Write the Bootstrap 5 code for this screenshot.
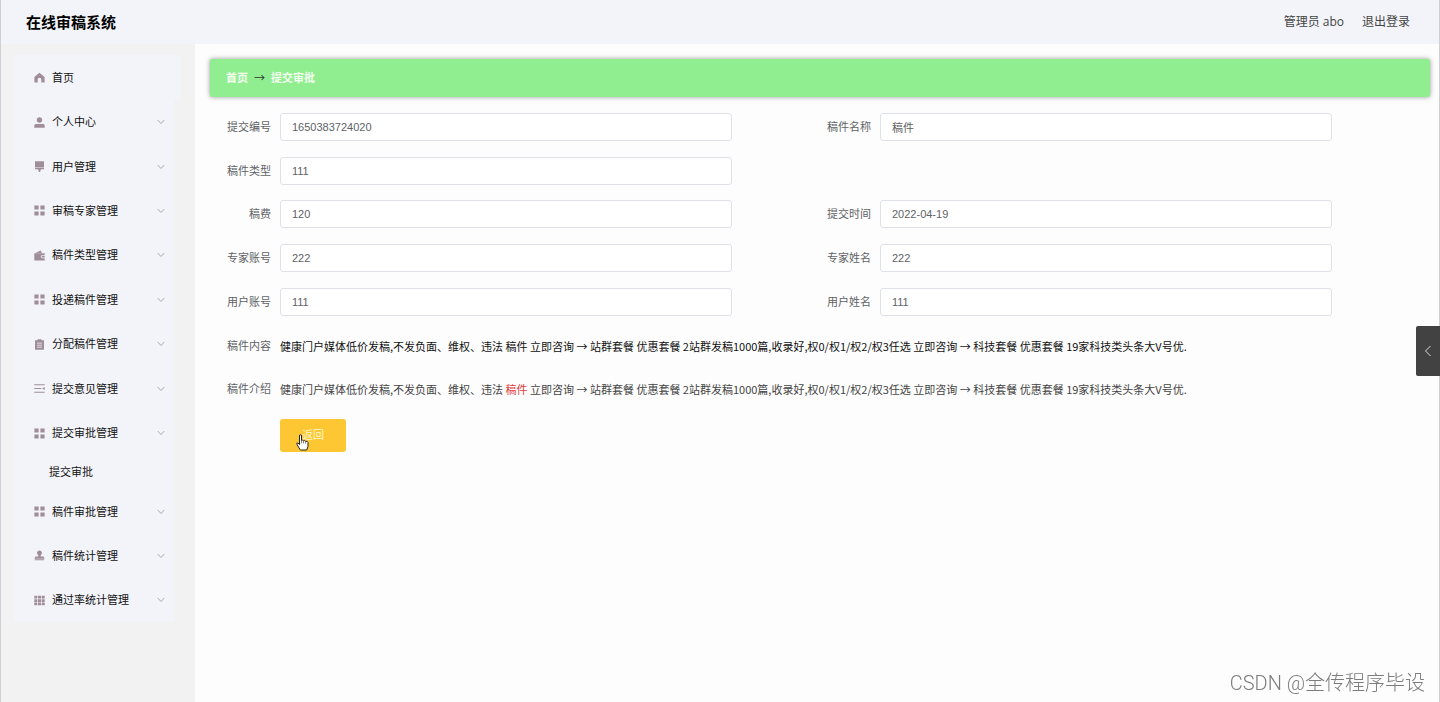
<!DOCTYPE html>
<html lang="zh-CN">
<head>
<meta charset="utf-8">
<meta name="viewport" content="width=device-width, initial-scale=1">
<title>在线审稿系统</title>
<link href="https://cdn.jsdelivr.net/npm/bootstrap@5.3.0/dist/css/bootstrap.min.css" rel="stylesheet">
<style>
  body { font-family: "Open Sans", "Noto Sans CJK SC", sans-serif; font-size: 11px; line-height: 16px; background: #fdfdfd; color: #111; border: solid #d0d0d4; border-width: 0 1px; }
  .topbar { min-height: 44px; background: #f3f4f9; padding: 0 29px 0 25px; }
  .site-title { font-size: 15px; line-height: 20px; font-weight: 700; color: #000; }
  .user-links { font-size: 12px; gap: 18px; color: #444; }
  .sidebar { width: 194px; background: #f2f2f2; padding: 11px 21px 0 13px; }
  .menu { min-height: 567px; background: #f3f4f9; border-radius: 3px; }
  .menu > li { flex: 1 1 44px; }
  .menu > li:first-child { margin-right: -7px; background: #f3f4f9; border-radius: 3px; }
  .menu > .submenu { flex: 0 0 34px; padding-left: 35px; }
  .menu-btn { border: 0; background: none; padding: 1px 9px 0 20px; gap: 7px; color: #111; }
  .menu-btn .glyph { width: 11px; height: 11px; fill: #9f8d9b; flex: none; }
  .menu-btn .caret { width: 8px; height: 6px; fill: none; stroke: #a9a8b3; flex: none; margin-left: auto; }
  .content-area { padding: 15px 9px 15px 15px; min-width: 0; }
  .crumbs { background: #90ee90; min-height: 38px; padding: 0 16px; gap: 6px; border-radius: 2px; box-shadow: 0 0 5px rgba(0,0,0,.4); font-weight: 700; margin-bottom: 16px; }
  .crumbs a, .crumbs .here { color: #f4fff0; }
  .crumbs .sep { color: #333; font-weight: 400; }
  .detail-form { padding: 0 10px; }
  .form-lines { min-height: 306px; }
  .form-lines > .row { flex: 1 1 43px; }
  .field-label { width: 60px; padding-right: 9px; text-align: right; color: #606266; line-height: 28px; flex: none; }
  .field-box { margin-right: 88px; }
  .form-control.field-input { height: 28px; font-family: "Liberation Sans", "Noto Sans CJK SC", sans-serif; font-size: 11px; line-height: 16px; padding: 0 11px; border-color: #dfe1e8; border-radius: 3px; color: #606266; background: #fff; }
  .rich { font-family: "Noto Sans CJK SC", sans-serif; line-height: 28px; }
  .rich.intro { color: #444; }
  .rich em { font-style: normal; color: #e23c3c; }
  .btn.btn-back { width: 66px; height: 33px; margin-left: 60px; padding: 0; font-size: 11px; color: #fff7cf; background: #fcc732; border: 0; border-radius: 3px; }
  .pointer { left: 16px; top: 15px; width: 13px; height: 17px; }
  .drawer-tab { right: 0; top: 326px; width: 24px; height: 50px; background: #424242; border: 0; border-radius: 2px 0 0 2px; z-index: 5; }
  .watermark { right: 15px; bottom: 7px; font-family: Roboto, "Noto Sans CJK SC", sans-serif; font-weight: 300; font-size: 20px; line-height: 24px; color: #7c7c7c; }
</style>
</head>
<body class="min-vh-100 d-flex flex-column">
<svg class="d-none" aria-hidden="true">
  <symbol id="home" viewBox="0 0 11 11"><path d="M5.500 .8 10.600 5v5.600H7.300V7.500a1.800 1.800 0 0 0-3.600 0v3.100H.4V5z"/></symbol>
  <symbol id="person" viewBox="0 0 11 11"><circle cx="5.500" cy="3" r="2.700"/><path d="M.3 10.700V8.500Q.3 7 2 7h7q1.700 0 1.700 1.500v2.200z"/></symbol>
  <symbol id="board" viewBox="0 0 11 11"><path d="M1 .3h9v5.900H1zM1 6.700h9v1.500H7.300L6.300 9.400V11H4.700V9.400L3.700 8.200H1z"/></symbol>
  <symbol id="grid4" viewBox="0 0 11 11"><path d="M.4.6h4.200v4H.4zm6 0h4.200v4H6.400zM.4 6.400h4.200v4H.4zm6 0h4.200v4H6.400z"/></symbol>
  <symbol id="grid9" viewBox="0 0 11 11"><path d="M.3.8h3v2.700h-3zm3.700 0h3v2.700H4zm3.700 0h3v2.700h-3zM.3 4.200h3v2.700h-3zm3.700 0h3v2.700H4zm3.700 0h3v2.700h-3zM.3 7.600h3v2.700h-3zm3.700 0h3v2.700H4zm3.700 0h3v2.700h-3z"/></symbol>
  <symbol id="wallet" viewBox="0 0 11 11"><path d="M1.500 3 6.500.6 8 3zM.3 3.300h10.400v2H8.200a1.400 1.400 0 0 0 0 2.900h2.500v2.200H.3z"/><path d="M8.300 6h2.400v1.500H8.300a.7.7 0 0 1 0-1.500z"/></symbol>
  <symbol id="clipboard" viewBox="0 0 11 11"><path fill-rule="evenodd" d="M1 1.300h2.500V.3h4v1H10v9.500H1zM3 3.700v.8h5v-.8zm0 2v.8h5v-.8zm0 2v.8h5v-.8z"/></symbol>
  <symbol id="lines" viewBox="0 0 11 11"><path d="M.3 1.300h10.400v1H.3zm0 3.700h7v1h-7zm0 3.800h10.400v1H.3zM10.700 4v3L8 5.500z"/></symbol>
  <symbol id="stamp" viewBox="0 0 11 11"><path d="M4.400 6.500Q4.500 5.300 3.500 4.200 2.600 2.800 3.500 1.500q2-2 4 0 .9 1.300 0 2.700-1 1.100-.9 2.300H9.500l1.200 2.200H.3l1.200-2.200zM.8 9.300h9.400v1H.8z"/></symbol>
  <symbol id="down" viewBox="0 0 8 6"><path d="m.7 1 3.300 3.500L7.300 1"/></symbol>
</svg>

<header class="topbar d-flex align-items-center justify-content-between">
  <div class="site-title">在线审稿系统</div>
  <div class="user-links d-flex">
    <span>管理员 abo</span>
    <a href="#" class="text-reset text-decoration-none">退出登录</a>
  </div>
</header>

<div class="d-flex flex-grow-1">
  <nav class="sidebar flex-shrink-0" aria-label="主菜单">
    <ul class="menu list-unstyled d-flex flex-column mb-0">
      <li class="d-flex"><button type="button" class="menu-btn w-100 d-flex align-items-center"><svg class="glyph"><use href="#home"/></svg>首页</button></li>
      <li class="d-flex"><button type="button" class="menu-btn w-100 d-flex align-items-center"><svg class="glyph"><use href="#person"/></svg>个人中心<svg class="caret"><use href="#down"/></svg></button></li>
      <li class="d-flex"><button type="button" class="menu-btn w-100 d-flex align-items-center"><svg class="glyph"><use href="#board"/></svg>用户管理<svg class="caret"><use href="#down"/></svg></button></li>
      <li class="d-flex"><button type="button" class="menu-btn w-100 d-flex align-items-center"><svg class="glyph"><use href="#grid4"/></svg>审稿专家管理<svg class="caret"><use href="#down"/></svg></button></li>
      <li class="d-flex"><button type="button" class="menu-btn w-100 d-flex align-items-center"><svg class="glyph"><use href="#wallet"/></svg>稿件类型管理<svg class="caret"><use href="#down"/></svg></button></li>
      <li class="d-flex"><button type="button" class="menu-btn w-100 d-flex align-items-center"><svg class="glyph"><use href="#grid4"/></svg>投递稿件管理<svg class="caret"><use href="#down"/></svg></button></li>
      <li class="d-flex"><button type="button" class="menu-btn w-100 d-flex align-items-center"><svg class="glyph"><use href="#clipboard"/></svg>分配稿件管理<svg class="caret"><use href="#down"/></svg></button></li>
      <li class="d-flex"><button type="button" class="menu-btn w-100 d-flex align-items-center"><svg class="glyph"><use href="#lines"/></svg>提交意见管理<svg class="caret"><use href="#down"/></svg></button></li>
      <li class="d-flex"><button type="button" class="menu-btn w-100 d-flex align-items-center"><svg class="glyph"><use href="#grid4"/></svg>提交审批管理<svg class="caret"><use href="#down"/></svg></button></li>
      <li class="submenu d-flex align-items-center"><a href="#" class="text-reset text-decoration-none">提交审批</a></li>
      <li class="d-flex"><button type="button" class="menu-btn w-100 d-flex align-items-center"><svg class="glyph"><use href="#grid4"/></svg>稿件审批管理<svg class="caret"><use href="#down"/></svg></button></li>
      <li class="d-flex"><button type="button" class="menu-btn w-100 d-flex align-items-center"><svg class="glyph"><use href="#stamp"/></svg>稿件统计管理<svg class="caret"><use href="#down"/></svg></button></li>
      <li class="d-flex"><button type="button" class="menu-btn w-100 d-flex align-items-center"><svg class="glyph"><use href="#grid9"/></svg>通过率统计管理<svg class="caret"><use href="#down"/></svg></button></li>
    </ul>
  </nav>

  <main class="content-area flex-grow-1">
    <nav class="crumbs d-flex align-items-center" aria-label="当前位置">
      <a href="#" class="text-decoration-none">首页</a><span class="sep">→</span><span class="here">提交审批</span>
    </nav>
    <form class="detail-form">
      <div class="form-lines d-flex flex-column">
        <div class="row g-0">
          <div class="col-6 d-flex"><label class="field-label" for="f1">提交编号</label><div class="field-box flex-grow-1"><input id="f1" class="form-control field-input" value="1650383724020" readonly></div></div>
          <div class="col-6 d-flex"><label class="field-label" for="f2">稿件名称</label><div class="field-box flex-grow-1"><input id="f2" class="form-control field-input" value="稿件" readonly></div></div>
        </div>
        <div class="row g-0">
          <div class="col-6 d-flex"><label class="field-label" for="f3">稿件类型</label><div class="field-box flex-grow-1"><input id="f3" class="form-control field-input" value="111" readonly></div></div>
        </div>
        <div class="row g-0">
          <div class="col-6 d-flex"><label class="field-label" for="f4">稿费</label><div class="field-box flex-grow-1"><input id="f4" class="form-control field-input" value="120" readonly></div></div>
          <div class="col-6 d-flex"><label class="field-label" for="f5">提交时间</label><div class="field-box flex-grow-1"><input id="f5" class="form-control field-input" value="2022-04-19" readonly></div></div>
        </div>
        <div class="row g-0">
          <div class="col-6 d-flex"><label class="field-label" for="f6">专家账号</label><div class="field-box flex-grow-1"><input id="f6" class="form-control field-input" value="222" readonly></div></div>
          <div class="col-6 d-flex"><label class="field-label" for="f7">专家姓名</label><div class="field-box flex-grow-1"><input id="f7" class="form-control field-input" value="222" readonly></div></div>
        </div>
        <div class="row g-0">
          <div class="col-6 d-flex"><label class="field-label" for="f8">用户账号</label><div class="field-box flex-grow-1"><input id="f8" class="form-control field-input" value="111" readonly></div></div>
          <div class="col-6 d-flex"><label class="field-label" for="f9">用户姓名</label><div class="field-box flex-grow-1"><input id="f9" class="form-control field-input" value="111" readonly></div></div>
        </div>
        <div class="row g-0">
          <div class="col-12 d-flex"><span class="field-label">稿件内容</span><div class="rich">健康门户媒体低价发稿,不发负面、维权、违法 稿件 立即咨询 → 站群套餐 优惠套餐 2站群发稿1000篇,收录好,权0/权1/权2/权3任选 立即咨询 → 科技套餐 优惠套餐 19家科技类头条大V号优.</div></div>
        </div>
        <div class="row g-0">
          <div class="col-12 d-flex"><span class="field-label">稿件介绍</span><div class="rich intro">健康门户媒体低价发稿,不发负面、维权、违法 <em>稿件</em> 立即咨询 → 站群套餐 优惠套餐 2站群发稿1000篇,收录好,权0/权1/权2/权3任选 立即咨询 → 科技套餐 优惠套餐 19家科技类头条大V号优.</div></div>
        </div>
      </div>
      <button type="button" class="btn btn-back position-relative">返回
        <svg class="pointer position-absolute" viewBox="0 0 13 17" aria-hidden="true"><path fill="#fff" stroke="#222" stroke-linejoin="round" d="M4 15.500 1 10.500Q.2 8.500 2 9l1.500 1.500V2q0-1.300 1-1.300t1 1.300v4.500q1.300-.8 2 .3 1.400-.6 2 .5Q11.700 7 12 8.500v4l-1.300 3.500H4.500z"/><path fill="none" stroke="#555" stroke-width=".7" d="M5.500 6.500v3M7.500 7v2.500M9.600 7.500v2.200"/></svg>
      </button>
    </form>
  </main>
</div>

<button type="button" class="drawer-tab position-fixed d-flex align-items-center justify-content-center p-0" aria-label="展开"><svg width="8" height="12" viewBox="0 0 8 12"><path fill="none" stroke="#ddd" d="M6.500 1 1.500 6l5 5"/></svg></button>
<div class="watermark position-fixed">CSDN @全传程序毕设</div>
<script src="https://cdn.jsdelivr.net/npm/bootstrap@5.3.0/dist/js/bootstrap.bundle.min.js"></script>
</body>
</html>
